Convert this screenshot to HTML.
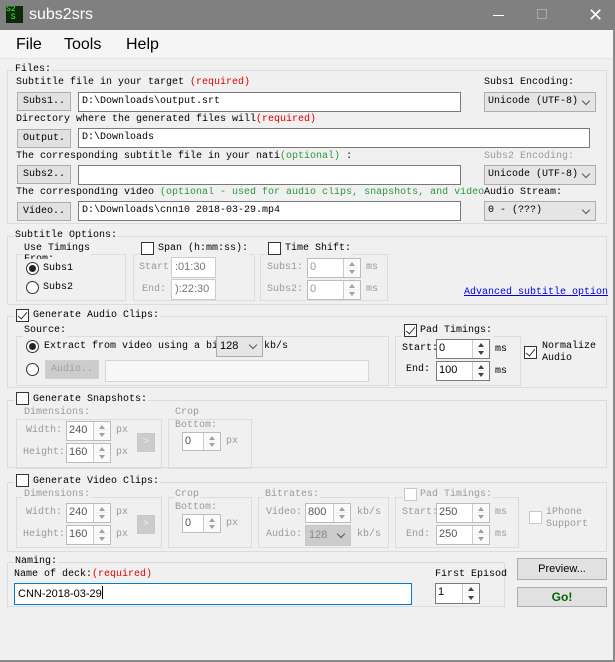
<!DOCTYPE html>
<html><head><meta charset="utf-8"><style>
*{box-sizing:border-box;margin:0;padding:0}
body{width:615px;height:662px;background:#f0f0f0;position:relative;overflow:hidden;font:10px/12px "Liberation Mono",monospace;color:#000}
div,span.a{position:absolute}
.t{position:absolute;white-space:nowrap;font:10px/12px "Liberation Mono",monospace}
.g{color:#9a9a9a}
.r{color:#e00000}
.gr{color:#2a9a3a}
.gb{position:absolute;border:1px solid #dcdcdc}
.lb{position:absolute;background:#f0f0f0;white-space:nowrap;padding:0 1px;line-height:12px}
.btn{position:absolute;background:#e1e1e1;border:1px solid #adadad;text-align:center;line-height:17px;white-space:nowrap}
.tb{position:absolute;background:#fff;border:1px solid #7a7a7a;padding-left:3px;line-height:18px;white-space:nowrap;overflow:hidden}
.cmb{position:absolute;background:#e5e5e5;border:1px solid #adadad;padding-left:3px;line-height:18px;white-space:nowrap;overflow:hidden}
.cmb:after{content:"";position:absolute;right:6px;top:5px;width:5px;height:5px;border-right:1px solid #555;border-bottom:1px solid #555;transform:rotate(45deg)}
.sp{position:absolute;background:#fff;border:1px solid #7a7a7a;padding-left:2px;line-height:17px;font-family:"Liberation Sans",sans-serif;font-size:11px}
.sp:after{content:"";position:absolute;right:0;top:0;bottom:0;width:16px;border-left:1px solid #ccc;background:linear-gradient(#f0f0f0,#f0f0f0) 2px 8px/12px 1px no-repeat,#fafafa}
.sp i{position:absolute;right:5px;width:0;height:0;border-left:3px solid transparent;border-right:3px solid transparent;z-index:2}
.sp i.u{top:3px;border-bottom:4px solid #444}
.sp i.d{bottom:3px;border-top:4px solid #444}
.sp.dis{border-color:#bcbcbc;color:#9a9a9a}
.sp.dis i.u{border-bottom-color:#a0a0a0}.sp.dis i.d{border-top-color:#a0a0a0}
.cb{position:absolute;width:13px;height:13px;border:1px solid #333;background:#fff}
.cb.on:after{content:"";position:absolute;left:3px;top:0px;width:4px;height:8px;border-right:1.5px solid #333;border-bottom:1.5px solid #333;transform:rotate(40deg)}
.cb.dis{border-color:#c8c8c8}
.rb{position:absolute;width:13px;height:13px;border:1px solid #333;border-radius:50%;background:#fff}
.rb.on:after{content:"";position:absolute;left:2px;top:2px;width:7px;height:7px;border-radius:50%;background:#222}
</style></head><body>
<div style="left:0;top:0;width:615px;height:30px;background:#808080"></div>
<div style="left:6px;top:6px;width:17px;height:17px;background:#0b2a0b;color:#3f3;font:8px/8px 'Liberation Mono';overflow:hidden">S2<br>&nbsp;S</div>
<div class="t" style="left:29px;top:5px;color:#fff;font:16px/20px 'Liberation Sans',sans-serif">subs2srs</div>
<div style="left:493px;top:15px;width:11px;height:1px;background:#fff"></div>
<div style="left:537px;top:9px;width:10px;height:10px;border:1px solid #aaa"></div>
<div class="t" style="left:588px;top:5px;color:#fff;font:18px/20px 'Liberation Sans',sans-serif">✕</div>
<div style="left:0;top:30px;width:613px;height:29px;background:#f5f5f5;border-bottom:1px solid #e5e5e5"></div>
<div class="t" style="left:16px;top:36px;font:16px/18px 'Liberation Sans',sans-serif">File</div>
<div class="t" style="left:64px;top:36px;font:16px/18px 'Liberation Sans',sans-serif">Tools</div>
<div class="t" style="left:126px;top:36px;font:16px/18px 'Liberation Sans',sans-serif">Help</div>
<div style="left:613px;top:30px;width:2px;height:632px;background:#8a8a8a"></div>
<div style="left:0;top:660px;width:615px;height:2px;background:#8a8a8a"></div>

<div class="gb" style="left:7px;top:70px;width:600px;height:154px"></div>
<div class="lb" style="left:14px;top:64px">Files:</div>
<div class="t" style="left:16px;top:77px">Subtitle file in your target <span class="r">(required)</span></div>
<div class="t" style="left:484px;top:77px">Subs1 Encoding:</div>
<div class="btn" style="left:17px;top:92px;width:54px;height:19px">Subs1..</div>
<div class="tb" style="left:78px;top:92px;width:383px;height:20px">D:\Downloads\output.srt</div>
<div class="cmb" style="left:484px;top:92px;width:112px;height:20px">Unicode (UTF-8)</div>
<div class="t" style="left:16px;top:114px">Directory where the generated files will<span class="r">(required)</span></div>
<div class="btn" style="left:17px;top:129px;width:54px;height:19px">Output.</div>
<div class="tb" style="left:78px;top:128px;width:512px;height:20px">D:\Downloads</div>
<div class="t" style="left:16px;top:151px">The corresponding subtitle file in your nati<span class="gr">(optional)</span> :</div>
<div class="t g" style="left:484px;top:151px">Subs2 Encoding:</div>
<div class="btn" style="left:17px;top:165px;width:54px;height:19px">Subs2..</div>
<div class="tb" style="left:78px;top:165px;width:383px;height:20px"></div>
<div class="cmb" style="left:484px;top:165px;width:112px;height:20px">Unicode (UTF-8)</div>
<div class="t" style="left:16px;top:187px;width:468px;overflow:hidden">The corresponding video <span class="gr">(optional - used for audio clips, snapshots, and video)</span></div>
<div class="t" style="left:484px;top:187px">Audio Stream:</div>
<div class="btn" style="left:17px;top:202px;width:54px;height:19px">Video..</div>
<div class="tb" style="left:78px;top:201px;width:383px;height:20px">D:\Downloads\cnn10 2018-03-29.mp4</div>
<div class="cmb" style="left:484px;top:201px;width:112px;height:20px">0 - (???)</div>

<div class="gb" style="left:7px;top:236px;width:600px;height:69px"></div>
<div class="lb" style="left:14px;top:230px">Subtitle Options:</div>
<div class="gb" style="left:16px;top:254px;width:110px;height:47px"></div>
<div class="lb" style="left:23px;top:243px">Use Timings</div>
<div class="t" style="left:24px;top:254px;height:5px;overflow:hidden">From:</div>
<div class="rb on" style="left:26px;top:262px"></div><div class="t" style="left:43px;top:263px">Subs1</div>
<div class="rb" style="left:26px;top:281px"></div><div class="t" style="left:43px;top:282px">Subs2</div>
<div class="gb" style="left:133px;top:254px;width:122px;height:47px"></div>
<div class="lb" style="left:140px;top:243px;padding-left:18px">Span (h:mm:ss):</div>
<div class="cb" style="left:141px;top:242px"></div>
<div class="t g" style="left:139px;top:262px">Start:</div>
<div class="tb" style="left:171px;top:257px;width:45px;height:21px;border-color:#ccc;color:#777;font-family:'Liberation Sans';font-size:11px">:01:30</div>
<div class="t g" style="left:142px;top:284px">End:</div>
<div class="tb" style="left:171px;top:279px;width:45px;height:21px;border-color:#ccc;color:#777;font-family:'Liberation Sans';font-size:11px">):22:30</div>
<div class="gb" style="left:260px;top:254px;width:128px;height:47px"></div>
<div class="lb" style="left:267px;top:243px;padding-left:18px">Time Shift:</div>
<div class="cb" style="left:268px;top:242px"></div>
<div class="t g" style="left:267px;top:262px">Subs1:</div>
<div class="sp dis" style="left:307px;top:258px;width:54px;height:20px">0<i class="u"></i><i class="d"></i></div>
<div class="t g" style="left:366px;top:262px">ms</div>
<div class="t g" style="left:267px;top:284px">Subs2:</div>
<div class="sp dis" style="left:307px;top:280px;width:54px;height:20px">0<i class="u"></i><i class="d"></i></div>
<div class="t g" style="left:366px;top:284px">ms</div>
<div class="t" style="left:464px;top:287px;color:#0000ee;text-decoration:underline">Advanced subtitle option</div>

<div class="gb" style="left:7px;top:316px;width:600px;height:72px"></div>
<div class="lb" style="left:14px;top:310px;padding-left:19px">Generate Audio Clips:</div>
<div class="cb on" style="left:16px;top:309px"></div>
<div class="gb" style="left:16px;top:336px;width:373px;height:50px"></div>
<div class="lb" style="left:23px;top:325px">Source:</div>
<div class="rb on" style="left:26px;top:340px"></div>
<div class="t" style="left:44px;top:341px">Extract from video using a bi</div>
<div class="cmb" style="left:216px;top:336px;width:47px;height:21px;font-family:'Liberation Sans';font-size:11px">128</div>
<div class="t" style="left:264px;top:341px">kb/s</div>
<div class="rb" style="left:26px;top:363px"></div>
<div class="btn" style="left:45px;top:360px;width:54px;height:19px;color:#a0a0a0;border-color:#cfcfcf;background:#ccc">Audio..</div>
<div class="tb" style="left:105px;top:360px;width:264px;height:22px;border-color:#d5d5d5;background:#f7f7f7"></div>
<div class="gb" style="left:395px;top:336px;width:126px;height:50px"></div>
<div class="lb" style="left:402px;top:325px;padding-left:18px">Pad Timings:</div>
<div class="cb on" style="left:404px;top:324px"></div>
<div class="t" style="left:402px;top:343px">Start:</div>
<div class="sp" style="left:436px;top:339px;width:54px;height:20px">0<i class="u"></i><i class="d"></i></div>
<div class="t" style="left:495px;top:344px">ms</div>
<div class="t" style="left:406px;top:364px">End:</div>
<div class="sp" style="left:436px;top:361px;width:54px;height:20px">100<i class="u"></i><i class="d"></i></div>
<div class="t" style="left:495px;top:366px">ms</div>
<div class="cb on" style="left:524px;top:346px"></div>
<div class="t" style="left:542px;top:341px">Normalize<br>Audio</div>

<div class="gb" style="left:7px;top:400px;width:600px;height:68px"></div>
<div class="lb" style="left:14px;top:394px;padding-left:19px">Generate Snapshots:</div>
<div class="cb" style="left:16px;top:392px"></div>
<div class="gb" style="left:16px;top:419px;width:146px;height:50px"></div>
<div class="lb g" style="left:23px;top:407px">Dimensions:</div>
<div class="t g" style="left:26px;top:425px">Width:</div>
<div class="sp dis" style="left:66px;top:421px;width:45px;height:20px;color:#555">240<i class="u"></i><i class="d"></i></div>
<div class="t g" style="left:116px;top:425px">px</div>
<div class="t g" style="left:23px;top:447px">Height:</div>
<div class="sp dis" style="left:66px;top:443px;width:45px;height:20px;color:#555">160<i class="u"></i><i class="d"></i></div>
<div class="t g" style="left:116px;top:447px">px</div>
<div class="btn" style="left:137px;top:433px;width:18px;height:19px;background:#ccc;border-color:#c8c8c8;color:#eee">&gt;</div>
<div class="gb" style="left:168px;top:419px;width:84px;height:50px"></div>
<div class="lb g" style="left:174px;top:407px">Crop</div>
<div class="t g" style="left:175px;top:420px">Bottom:</div>
<div class="sp dis" style="left:182px;top:432px;width:39px;height:19px;color:#555">0<i class="u"></i><i class="d"></i></div>
<div class="t g" style="left:226px;top:436px">px</div>

<div class="gb" style="left:7px;top:482px;width:600px;height:70px"></div>
<div class="lb" style="left:14px;top:476px;padding-left:19px">Generate Video Clips:</div>
<div class="cb" style="left:16px;top:474px"></div>
<div class="gb" style="left:16px;top:497px;width:146px;height:51px"></div>
<div class="lb g" style="left:23px;top:489px">Dimensions:</div>
<div class="t g" style="left:26px;top:507px">Width:</div>
<div class="sp dis" style="left:66px;top:503px;width:45px;height:20px;color:#555">240<i class="u"></i><i class="d"></i></div>
<div class="t g" style="left:116px;top:507px">px</div>
<div class="t g" style="left:23px;top:529px">Height:</div>
<div class="sp dis" style="left:66px;top:525px;width:45px;height:20px;color:#555">160<i class="u"></i><i class="d"></i></div>
<div class="t g" style="left:116px;top:529px">px</div>
<div class="btn" style="left:137px;top:515px;width:18px;height:19px;background:#ccc;border-color:#c8c8c8;color:#eee">&gt;</div>
<div class="gb" style="left:168px;top:497px;width:84px;height:51px"></div>
<div class="lb g" style="left:174px;top:489px">Crop</div>
<div class="t g" style="left:175px;top:502px">Bottom:</div>
<div class="sp dis" style="left:182px;top:514px;width:39px;height:19px;color:#555">0<i class="u"></i><i class="d"></i></div>
<div class="t g" style="left:226px;top:518px">px</div>
<div class="gb" style="left:258px;top:497px;width:131px;height:51px"></div>
<div class="lb g" style="left:264px;top:489px">Bitrates:</div>
<div class="t g" style="left:266px;top:507px">Video:</div>
<div class="sp dis" style="left:305px;top:503px;width:46px;height:20px;color:#555">800<i class="u"></i><i class="d"></i></div>
<div class="t g" style="left:357px;top:507px">kb/s</div>
<div class="t g" style="left:266px;top:529px">Audio:</div>
<div class="cmb" style="left:305px;top:525px;width:46px;height:21px;background:#ccc;border-color:#c8c8c8;color:#888;font-family:'Liberation Sans';font-size:11px">128</div>
<div class="t g" style="left:357px;top:529px">kb/s</div>
<div class="gb" style="left:395px;top:497px;width:124px;height:51px"></div>
<div class="lb g" style="left:402px;top:489px;padding-left:18px">Pad Timings:</div>
<div class="cb dis" style="left:404px;top:488px"></div>
<div class="t g" style="left:402px;top:507px">Start:</div>
<div class="sp dis" style="left:436px;top:503px;width:54px;height:20px;color:#555">250<i class="u"></i><i class="d"></i></div>
<div class="t g" style="left:495px;top:507px">ms</div>
<div class="t g" style="left:406px;top:529px">End:</div>
<div class="sp dis" style="left:436px;top:525px;width:54px;height:20px;color:#555">250<i class="u"></i><i class="d"></i></div>
<div class="t g" style="left:495px;top:529px">ms</div>
<div class="cb dis" style="left:529px;top:511px"></div>
<div class="t g" style="left:546px;top:507px">iPhone<br>Support</div>

<div class="gb" style="left:7px;top:562px;width:498px;height:45px"></div>
<div class="lb" style="left:14px;top:556px">Naming:</div>
<div class="t" style="left:14px;top:569px">Name of deck:<span class="r">(required)</span></div>
<div class="tb" style="left:14px;top:583px;width:398px;height:22px;border-color:#0078d7;font-family:'Liberation Sans';font-size:11px;line-height:20px">CNN-2018-03-29<span style="display:inline-block;width:1px;height:13px;background:#000;vertical-align:-2px"></span></div>
<div class="t" style="left:435px;top:569px;width:72px;overflow:hidden">First Episode:</div>
<div class="sp" style="left:435px;top:583px;width:45px;height:21px">1<i class="u"></i><i class="d"></i></div>
<div class="btn" style="left:517px;top:558px;width:90px;height:22px;line-height:20px;font:11px/20px 'Liberation Sans',sans-serif">Preview...</div>
<div class="btn" style="left:517px;top:587px;width:90px;height:20px;line-height:18px;font:bold 12px/18px 'Liberation Sans',sans-serif;color:#006400">Go!</div>
</body></html>
